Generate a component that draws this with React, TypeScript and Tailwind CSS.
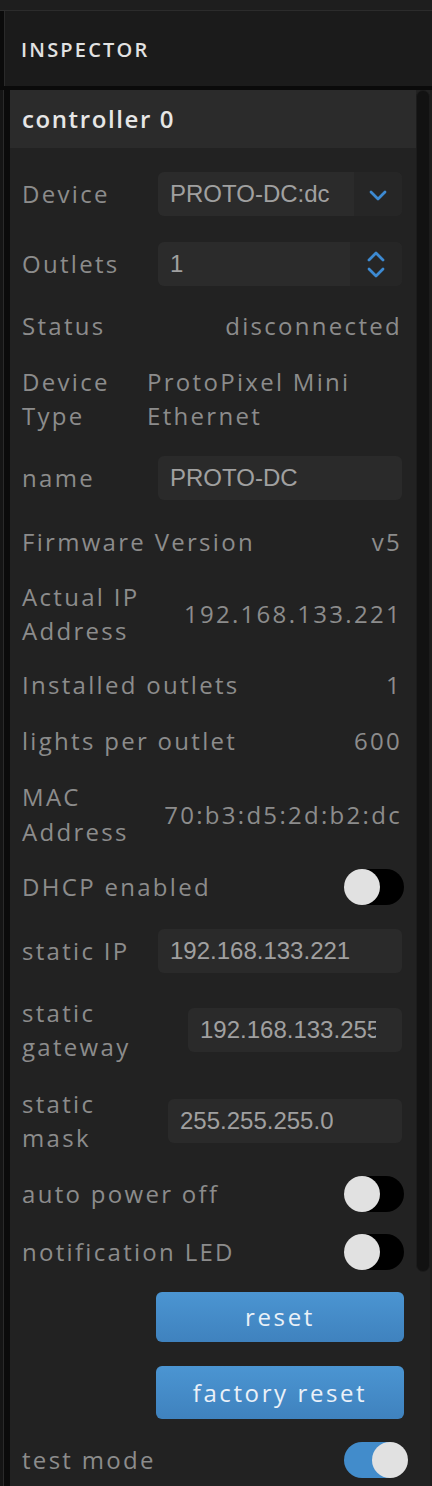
import React from 'react';

const inputFont = "font-['Liberation_Sans',Arial,sans-serif] tracking-normal";

function Chevron({ up = false }: { up?: boolean }) {
  return (
    <svg width="18" height="11" viewBox="0 0 18 11" fill="none">
      <polyline
        points={up ? '2,9 9,2 16,9' : '2,2 9,9 16,2'}
        stroke="#3d8ad2"
        strokeWidth="2.8"
        strokeLinecap="round"
        strokeLinejoin="round"
      />
    </svg>
  );
}

function TextInput({ value, width, clip = false }: { value: string; width: string; clip?: boolean }) {
  return (
    <div
      className={`flex h-[44px] ${width} items-center rounded-[6px] bg-[#2a2a2a] pl-[12px] ${clip ? 'pr-[26px]' : 'pr-[12px]'} text-[24px] text-[#a0a0a0] ${inputFont}`}
    >
      <div className="overflow-hidden whitespace-nowrap">{value}</div>
    </div>
  );
}

function Toggle({ on = false }: { on?: boolean }) {
  return (
    <div className={`relative h-[36px] w-[60px] rounded-full ${on ? 'bg-[#428ccb]' : 'bg-black'} mr-[-2px]`}>
      <div
        className={`absolute top-0 h-[36px] w-[36px] rounded-full bg-[#e1e1e1] ${on ? 'left-[28px]' : 'left-0'}`}
      />
    </div>
  );
}

function BlueButton({ label, height }: { label: string; height: string }) {
  return (
    <div className="flex justify-end">
      <button
        className={`mr-[-2px] flex ${height} w-[248px] items-center justify-center rounded-[6px] bg-gradient-to-b from-[#4b95d2] to-[#3f82be] text-[24px] tracking-[2.6px] text-[#eaf1f8]`}
      >
        {label}
      </button>
    </div>
  );
}

export default function App() {
  return (
    <div className="flex h-[1486px] w-[432px] flex-col overflow-hidden bg-[#1b1b1b] font-['Open_Sans',sans-serif]">
      {/* top strip */}
      <div className="h-[10px] bg-[#1e1e1e]" />
      <div className="h-px bg-[#2c2c2c]" />

      {/* inspector title */}
      <div className="flex h-[75px]">
        <div className="w-[4px] bg-[#0b0b0b]" />
        <div className="w-px bg-[#2a2a2a]" />
        <div className="flex flex-1 items-center pl-[16px] pt-[2px] text-[20px] font-semibold tracking-[2.2px] text-[#e2e2e2]">
          INSPECTOR
        </div>
      </div>
      <div className="h-[4px] bg-[#0a0a0a]" />

      {/* body */}
      <div className="flex flex-1">
        <div className="w-[3px] bg-[#151515]" />
        <div className="w-px bg-[#2a2a2a]" />
        <div className="w-[6px] bg-[#0b0b0b]" />

        <div className="flex w-[406px] flex-col bg-[#222222]">
          <div className="flex h-[58px] items-center bg-[#2b2b2b] pl-[12px] text-[24px] font-semibold tracking-[1.6px] text-[#e6e6e6]">
            controller 0
          </div>

          <div className="flex flex-col pl-[12px] pr-[14px] text-[24px] leading-[34px] tracking-[2.3px] text-[#8c8c8c]">
            {/* Device */}
            <div className="mt-[24px] flex h-[44px] items-center justify-between">
              <span>Device</span>
              <div className="flex h-[44px] w-[244px] overflow-hidden rounded-[6px] bg-[#2b2b2b]">
                <div className={`flex flex-1 items-center pl-[12px] text-[24px] text-[#a0a0a0] ${inputFont}`}>
                  PROTO-DC:dc
                </div>
                <div className="flex w-[48px] items-center justify-center bg-[#262626] pt-[2px]">
                  <Chevron />
                </div>
              </div>
            </div>

            {/* Outlets */}
            <div className="mt-[26px] flex h-[44px] items-center justify-between">
              <span>Outlets</span>
              <div className="flex h-[44px] w-[244px] overflow-hidden rounded-[6px] bg-[#2b2b2b]">
                <div className={`flex flex-1 items-center pl-[12px] text-[24px] text-[#a0a0a0] ${inputFont}`}>1</div>
                <div className="flex w-[52px] flex-col items-center justify-center gap-[5px] bg-[#262626]">
                  <Chevron up />
                  <Chevron />
                </div>
              </div>
            </div>

            {/* Status */}
            <div className="mt-[23px] flex h-[34px] items-center justify-between">
              <span>Status</span>
              <span>disconnected</span>
            </div>

            {/* Device Type */}
            <div className="mt-[22px] flex">
              <div className="w-[125px]">
                Device
                <br />
                Type
              </div>
              <div>
                ProtoPixel Mini
                <br />
                Ethernet
              </div>
            </div>

            {/* name */}
            <div className="mt-[23px] flex h-[44px] items-center justify-between">
              <span>name</span>
              <TextInput value="PROTO-DC" width="w-[244px]" />
            </div>

            {/* Firmware */}
            <div className="mt-[25px] flex h-[34px] items-center justify-between">
              <span>Firmware Version</span>
              <span>v5</span>
            </div>

            {/* Actual IP */}
            <div className="mt-[21px] flex items-center justify-between">
              <span>
                Actual IP
                <br />
                Address
              </span>
              <span>192.168.133.221</span>
            </div>

            {/* Installed outlets */}
            <div className="mt-[20px] flex h-[34px] items-center justify-between">
              <span>Installed outlets</span>
              <span>1</span>
            </div>

            {/* lights per outlet */}
            <div className="mt-[22px] flex h-[34px] items-center justify-between">
              <span>lights per outlet</span>
              <span>600</span>
            </div>

            {/* MAC */}
            <div className="mt-[21px] flex items-center justify-between leading-[35px]">
              <span>
                MAC
                <br />
                Address
              </span>
              <span>70:b3:d5:2d:b2:dc</span>
            </div>

            {/* DHCP */}
            <div className="mt-[20px] flex h-[36px] items-center justify-between">
              <span>DHCP enabled</span>
              <Toggle />
            </div>

            {/* static IP */}
            <div className="mt-[24px] flex h-[44px] items-center justify-between">
              <span>static IP</span>
              <TextInput value="192.168.133.221" width="w-[244px]" />
            </div>

            {/* static gateway */}
            <div className="mt-[23px] flex items-center justify-between">
              <span>
                static
                <br />
                gateway
              </span>
              <TextInput value="192.168.133.255" width="w-[214px]" clip />
            </div>

            {/* static mask */}
            <div className="mt-[23px] flex items-center justify-between">
              <span>
                static
                <br />
                mask
              </span>
              <TextInput value="255.255.255.0" width="w-[234px]" />
            </div>

            {/* auto power off */}
            <div className="mt-[21px] flex h-[36px] items-center justify-between">
              <span>auto power off</span>
              <Toggle />
            </div>

            {/* notification LED */}
            <div className="mt-[22px] flex h-[36px] items-center justify-between">
              <span>notification LED</span>
              <Toggle />
            </div>

            <div className="mt-[22px]">
              <BlueButton label="reset" height="h-[50px]" />
            </div>
            <div className="mt-[24px]">
              <BlueButton label="factory reset" height="h-[53px]" />
            </div>

            {/* test mode */}
            <div className="mt-[23px] flex h-[36px] items-center justify-between">
              <span>test mode</span>
              <Toggle on />
            </div>
          </div>
        </div>

        {/* scrollbar */}
        <div className="w-[14px] bg-[#222222]">
          <div className="h-[1182px] rounded-[7px] border border-[#1c1c1c] bg-[#121212]" />
        </div>
        <div className="w-[2px] bg-[#1c1c1c]" />
      </div>
    </div>
  );
}
